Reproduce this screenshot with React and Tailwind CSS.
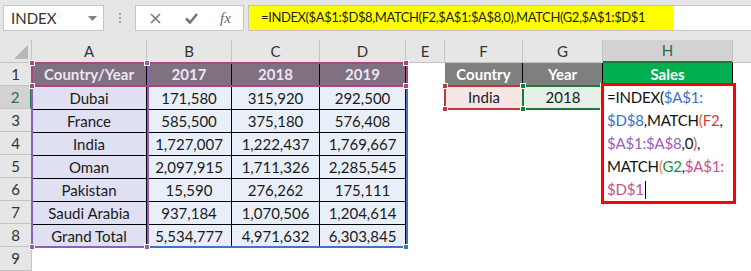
import React from 'react';

const font = { fontFamily: 'Lato, "Open Sans", sans-serif' };

const data = [
  ['Dubai', '171,580', '315,920', '292,500'],
  ['France', '585,500', '375,180', '576,408'],
  ['India', '1,727,007', '1,222,437', '1,769,667'],
  ['Oman', '2,097,915', '1,711,326', '2,285,545'],
  ['Pakistan', '15,590', '276,262', '175,111'],
  ['Saudi Arabia', '937,184', '1,070,506', '1,204,614'],
  ['Grand Total', '5,534,777', '4,971,632', '6,303,845'],
];

const letters = ['A', 'B', 'C', 'D', 'E', 'F', 'G', 'H'];

const hdr = 'bg-[#e6e6e6] border-r border-b border-[#c3c3c3] flex items-center justify-center text-[15px] text-[#333]';
const blank = 'bg-white';

// small range handle square
const Handle = ({ x, y, color }) => (
  <div
    className={`absolute w-[6px] h-[6px] border border-white ${color}`}
    style={{ left: x - 3, top: y - 3 }}
  />
);

const FormulaBar = () => (
  <div className="h-[40px] bg-[#e6e6e6] flex items-start pt-[5px]">
    {/* Name box */}
    <div className="ml-[3px] w-[101px] h-[26px] bg-white border border-[#c6c6c6] flex items-center justify-between pl-[7px] pr-[6px]">
      <span className="text-[15px] text-[#333]">INDEX</span>
      <svg width="9" height="5" viewBox="0 0 9 5"><path d="M0 0 L9 0 L4.5 5 Z" fill="#808080" /></svg>
    </div>
    <div className="w-[31px] h-[26px] flex flex-col items-center justify-center gap-[2px]">
      <div className="w-[2px] h-[2px] bg-[#a8a8a8]" />
      <div className="w-[2px] h-[2px] bg-[#a8a8a8]" />
      <div className="w-[2px] h-[2px] bg-[#a8a8a8]" />
    </div>
    {/* Buttons */}
    <div className="w-[109px] h-[26px] bg-white border border-[#c6c6c6] flex items-center">
      <div className="w-[38px] flex justify-center">
        <svg width="11" height="11" viewBox="0 0 11 11"><path d="M1 1 L10 10 M10 1 L1 10" stroke="#777" strokeWidth="1.6" /></svg>
      </div>
      <div className="w-[34px] flex justify-center">
        <svg width="13" height="11" viewBox="0 0 13 11"><path d="M1 5.5 L5 9.5 L12 1" stroke="#777" strokeWidth="2.6" fill="none" /></svg>
      </div>
      <div className="flex-1 flex justify-center">
        <span className="italic text-[15px] text-[#666]" style={{ fontFamily: '"Liberation Serif", serif' }}>fx</span>
      </div>
    </div>
    <div className="ml-[4px] flex-1 h-[26px] bg-white border-y border-l border-[#c6c6c6] flex">
      <div className="bg-[#ffff00] h-full w-[425px] pl-[12px] flex items-center text-[13px] text-[#222] whitespace-nowrap tracking-[-0.4px]">
        =INDEX($A$1:$D$8,MATCH(F2,$A$1:$A$8,0),MATCH(G2,$A$1:$D$1
      </div>
    </div>
  </div>
);

const Sheet = () => {
  const cells = [];
  // column header row
  cells.push(
    <div key="corner" className="bg-[#e6e6e6] border-r border-b border-[#c3c3c3] flex items-end justify-end p-[3px]">
      <svg width="14" height="14" viewBox="0 0 14 14"><path d="M14 0 L14 14 L0 14 Z" fill="#b6b6b6" /></svg>
    </div>
  );
  letters.forEach((l) =>
    cells.push(
      l === 'H' ? (
        <div key={l} className="bg-[#d2d2d2] border-r border-[#c3c3c3] border-b-2 border-b-[#217346] flex items-center justify-center text-[15px] text-[#217346]">{l}</div>
      ) : (
        <div key={l} className={hdr}>{l}</div>
      )
    )
  );
  cells.push(<div key="hx" className="bg-[#e6e6e6] border-b border-[#c3c3c3]" />);

  // row 1
  cells.push(<div key="r1" className={hdr}>1</div>);
  ['Country/Year', '2017', '2018', '2019'].forEach((t) =>
    cells.push(
      <div key={'h' + t} className="bg-[#7f7180] border-r border-black flex items-center justify-center font-bold text-[15px] text-[#ebe6f5]">{t}</div>
    )
  );
  cells.push(<div key="e1" className={blank} />);
  cells.push(<div key="f1" className="bg-[#7f7f7f] border-r border-black flex items-center justify-center font-bold text-[15px] text-white">Country</div>);
  cells.push(<div key="g1" className="bg-[#7f7f7f] border-r border-black flex items-center justify-center font-bold text-[15px] text-white">Year</div>);
  cells.push(<div key="h1" className="bg-[#00b050] border-r border-black flex items-center justify-center font-bold text-[15px] text-white">Sales</div>);
  cells.push(<div key="x1" className={blank} />);

  // rows 2..8
  data.forEach((row, i) => {
    const n = i + 2;
    cells.push(
      n === 2 ? (
        <div key={'r' + n} className="bg-[#d2d2d2] border-b border-[#c3c3c3] border-r-2 border-r-[#217346] flex items-center justify-center text-[15px] text-[#217346]">{n}</div>
      ) : (
        <div key={'r' + n} className={hdr}>{n}</div>
      )
    );
    row.forEach((v, j) =>
      cells.push(
        <div
          key={n + '-' + j}
          className={`${j === 0 ? 'bg-[#dfe0f2]' : 'bg-[#e9eff9]'} border-r border-t border-black flex items-center justify-center text-[15px] text-[#1a1a1a]`}
        >
          {v}
        </div>
      )
    );
    cells.push(<div key={'e' + n} className={blank} />);
    if (n === 2) {
      cells.push(<div key="f2" className="bg-[#f6e6e6] flex items-center justify-center text-[15px] text-[#1a1a1a]">India</div>);
      cells.push(<div key="g2" className="bg-[#e6f0e7] flex items-center justify-center text-[15px] text-[#1a1a1a]">2018</div>);
    } else {
      cells.push(<div key={'f' + n} className={blank} />);
      cells.push(<div key={'g' + n} className={blank} />);
    }
    cells.push(<div key={'hh' + n} className={blank} />);
    cells.push(<div key={'x' + n} className={blank} />);
  });

  // row 9
  cells.push(<div key="r9" className={hdr}>9</div>);
  for (let k = 0; k < 9; k++) cells.push(<div key={'b9' + k} className={blank} />);

  return (
    <div className="relative">
      <div className="grid grid-cols-[32px_115px_85px_88px_86px_39px_78px_80px_130px_1fr] grid-rows-[23px_repeat(8,23px)_24px]">
        {cells}
      </div>

      {/* range highlights drawn over the grid */}
      <div className="absolute left-[31px] top-[22px] w-[377px] h-[186px] border-2 border-[#4472c4]" />
      <div className="absolute left-[31px] top-[22px] w-[118px] h-[186px] border-2 border-[#8e5fb8]" />
      <div className="absolute left-[31px] top-[22px] w-[377px] h-[25px] border-2 border-[#ad4583]" />
      <Handle x={32} y={23} color="bg-[#4472c4]" />
      <Handle x={406} y={207} color="bg-[#4472c4]" />
      <Handle x={147} y={23} color="bg-[#8e5fb8]" />
      <Handle x={147} y={207} color="bg-[#8e5fb8]" />
      <Handle x={32} y={207} color="bg-[#8e5fb8]" />
      <Handle x={32} y={23} color="bg-[#ad4583]" />
      <Handle x={406} y={23} color="bg-[#ad4583]" />
      <Handle x={32} y={46} color="bg-[#ad4583]" />
      <Handle x={406} y={46} color="bg-[#ad4583]" />

      <div className="absolute left-[444px] top-[45px] w-[80px] h-[25px] border-2 border-[#c0393f]" />
      <Handle x={445} y={46} color="bg-[#c0393f]" />
      <Handle x={445} y={69} color="bg-[#c0393f]" />
      <div className="absolute left-[522px] top-[45px] w-[82px] h-[25px] border-2 border-[#1e7a3a]" />
      <Handle x={523} y={46} color="bg-[#1e7a3a]" />
      <Handle x={523} y={69} color="bg-[#1e7a3a]" />
      <Handle x={603} y={46} color="bg-[#1e7a3a]" />
      <Handle x={603} y={69} color="bg-[#1e7a3a]" />

      {/* cell being edited */}
      <div className="absolute left-[601px] top-[43px] w-[135px] h-[121px] border-[3px] border-[#ff0000] bg-white pl-[3px] text-[15px] leading-[23px] text-[#111] whitespace-nowrap tracking-[-0.2px]">
        <div>=INDEX(<span className="text-[#3d6fd0]">$A$1:</span></div>
        <div><span className="text-[#3d6fd0]">$D$8</span>,MATCH<span className="text-[#d9603a]">(</span><span className="text-[#c8403f]">F2</span>,</div>
        <div><span className="text-[#9a5cbf]">$A$1:$A$8</span>,0<span className="text-[#d9603a]">)</span>,</div>
        <div>MATCH<span className="text-[#e08a4a]">(</span><span className="text-[#1e8a3c]">G2</span>,<span className="text-[#c4508e]">$A$1:</span></div>
        <div className="flex items-center"><span className="text-[#c4508e]">$D$1</span><span className="inline-block w-px h-[18px] bg-black ml-px" /></div>
      </div>
    </div>
  );
};

export default function App() {
  return (
    <div className="w-[751px] h-[271px] overflow-hidden bg-white" style={font}>
      <FormulaBar />
      <Sheet />
    </div>
  );
}
